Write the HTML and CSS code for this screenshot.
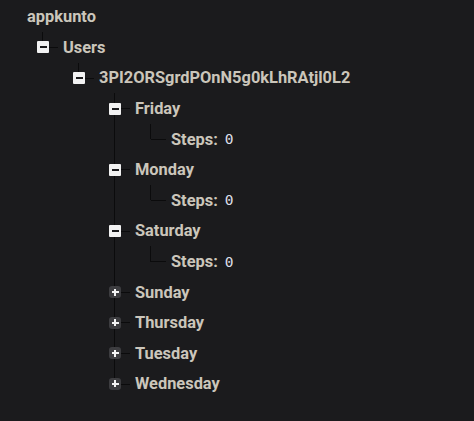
FILE: index.html
```html
<!DOCTYPE html>
<html>
<head>
<meta charset="utf-8">
<link rel="stylesheet" href="styles.css">
</head>
<body>
<div class="tree">
  <div class="row root"><span class="label">appkunto</span></div>
  <ul class="children top">
    <li>
      <div class="row"><span class="toggle minus"></span><span class="label">Users</span></div>
      <ul class="children">
        <li>
          <div class="row"><span class="toggle minus"></span><span class="label">3PI2ORSgrdPOnN5g0kLhRAtjl0L2</span></div>
          <ul class="children">
            <li>
              <div class="row"><span class="toggle minus"></span><span class="label">Friday</span></div>
              <ul class="children">
                <li class="leaf"><div class="row"><span class="label">Steps:</span><span class="value">0</span></div></li>
              </ul>
            </li>
            <li>
              <div class="row"><span class="toggle minus"></span><span class="label">Monday</span></div>
              <ul class="children">
                <li class="leaf"><div class="row"><span class="label">Steps:</span><span class="value">0</span></div></li>
              </ul>
            </li>
            <li>
              <div class="row"><span class="toggle minus"></span><span class="label">Saturday</span></div>
              <ul class="children">
                <li class="leaf"><div class="row"><span class="label">Steps:</span><span class="value">0</span></div></li>
              </ul>
            </li>
            <li><div class="row"><span class="toggle plus"></span><span class="label">Sunday</span></div></li>
            <li><div class="row"><span class="toggle plus"></span><span class="label">Thursday</span></div></li>
            <li><div class="row"><span class="toggle plus"></span><span class="label">Tuesday</span></div></li>
            <li><div class="row"><span class="toggle plus"></span><span class="label">Wednesday</span></div></li>
          </ul>
        </li>
      </ul>
    </li>
  </ul>
</div>
</body>
</html>
```
FILE: styles.css
```css
html, body {
  margin: 0;
  padding: 0;
  background: #1b1b1d;
  height: 100%;
}
body {
  font-family: Roboto, "Liberation Sans", sans-serif;
  color: #cbc6bb;
  font-weight: 700;
  font-size: 16.4px;
}
.tree {
  padding: 1.5px 0 0 27px;
}
.row {
  display: flex;
  align-items: center;
  height: 30.6px;
  position: relative;
  z-index: 1;
}
.root .label { margin-left: 0; }
ul.children {
  list-style: none;
  margin: 0 0 0 36px;
  padding: 0;
}
ul.children.top { margin-left: 10px; }
li {
  position: relative;
}
li::before {
  content: "";
  position: absolute;
  left: 5px;
  top: 0;
  bottom: 0;
  border-left: 1px solid #0b0b0c;
}
li:last-child::before {
  bottom: auto;
  height: 15.3px;
}
li::after {
  content: "";
  position: absolute;
  left: 6px;
  top: 15px;
  width: 15px;
  border-top: 1px solid #0b0b0c;
}
.toggle {
  width: 12px;
  height: 12px;
  box-sizing: border-box;
  display: flex;
  align-items: center;
  justify-content: center;
  flex: none;
  position: relative;
}
.label { margin-left: 14px; }
.leaf .row { padding-left: 12px; }
.minus {
  background: #f2f2f2;
  border-radius: 1px;
}
.minus::before {
  content: "";
  width: 7px;
  height: 2px;
  background: #1b1b1d;
}
.plus {
  background: #3d3d40;
  border-radius: 3px;
}
.plus::before, .plus::after {
  content: "";
  position: absolute;
  background: #f4f4f4;
}
.plus::before { width: 7px; height: 2px; left: 2.5px; top: 5px; }
.plus::after { width: 2px; height: 7px; left: 5px; top: 2.5px; }
.value {
  font-family: "DejaVu Sans Mono", "Liberation Mono", monospace;
  font-weight: 400;
  color: #dcdfe8;
  font-size: 14.5px;
  margin-left: 7px;
}
```
